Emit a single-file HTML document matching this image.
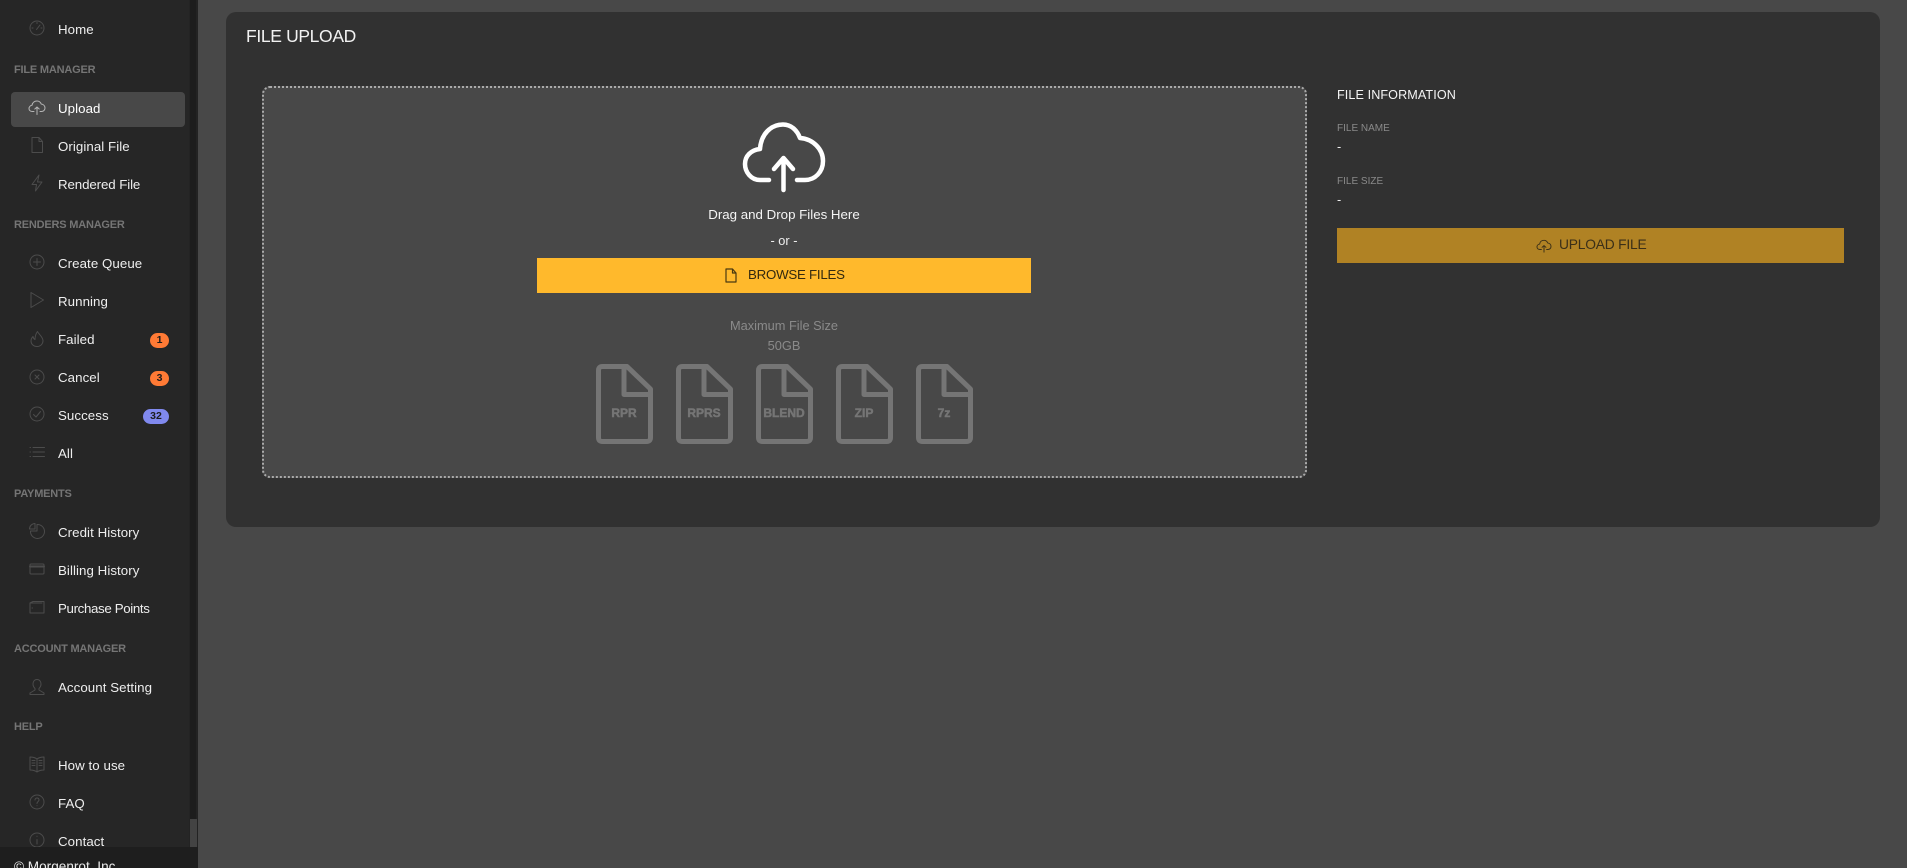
<!DOCTYPE html>
<html><head><meta charset="utf-8"><title>File Upload</title>
<style>
html,body{margin:0;padding:0;width:1907px;height:868px;overflow:hidden;background:#484848}
body{position:relative;font-family:"Liberation Sans",sans-serif;color:#eee}
.a{position:absolute}
.t{position:absolute;white-space:nowrap;line-height:20px;height:20px}
.i{left:58px;font-size:13.3px;letter-spacing:.06px;color:#eee}
.h{left:14px;font-size:11px;font-weight:bold;color:#757575;letter-spacing:-.2px;margin-top:1px}
.c{transform:translateX(-50%)}
svg{position:absolute;overflow:visible}
.s{left:28px;width:18px;height:18px;fill:none;stroke:#4c4c4c;stroke-width:1;stroke-linecap:round;stroke-linejoin:round}
.b{position:absolute;height:15px;border-radius:8px;color:#1c1c1c;font-size:10.5px;font-weight:bold;line-height:15px;text-align:center;left:150px;width:19px;background:#ff7a35}
.f{position:absolute;top:364px;width:57px;height:80px}
.f b{position:absolute;left:0;right:0;top:39px;text-align:center;font-size:12px;line-height:20px;color:#757575;-webkit-text-stroke:.5px #757575}
.f svg{left:0;top:0;width:57px;height:80px;fill:none;stroke:#757575;stroke-width:5;stroke-linejoin:round}
</style></head><body>
<div class="a" style="left:0;top:0;width:189px;height:868px;background:#262626"></div>
<div class="a" style="left:189px;top:0;width:9px;height:868px;background:#232323"></div>
<div class="a" style="left:190px;top:0;width:6px;height:819px;background:#1d1d1d"></div>
<div class="a" style="left:190px;top:819px;width:7px;height:28px;background:#434343"></div>
<div class="a" style="left:0;top:847px;width:198px;height:21px;background:#1e1e1e"></div>
<div class="a" style="left:11px;top:92px;width:174px;height:35px;border-radius:4px;background:#484848"></div>

<svg class="s" style="top:19px" viewBox="0 0 18 18"><circle cx="9" cy="9" r="7"/><path d="M9 3.500v1M4 9h1M13 9h1M8.500 10.500L12 6"/></svg>
<div class="t i" style="top:20px">Home</div>
<div class="t h" style="top:59px">FILE MANAGER</div>

<svg class="s" style="top:98px;stroke:#b5b5b5" viewBox="0 0 18 18"><path d="M6 13.500H4.500C2 13.500 1 12 1 10.500 1 9 2.200 7.500 4 7.300 4.300 4.500 6.500 3 9 3 11 3 12.500 4.200 13.200 6 15.500 6.300 17 8 17 10 17 12 15.500 13.500 13.500 13.500H12M9 16.500V9M6.800 11L9 9 11.200 11"/></svg>
<div class="t i" style="top:98.500px;color:#fff">Upload</div>

<svg class="s" style="top:136px" viewBox="0 0 18 18"><path d="M4 1.500H11L14.500 5.500V16.500H4ZM11 1.500V5.500H14.500"/></svg>
<div class="t i" style="top:136.500px">Original File</div>

<svg class="s" style="top:174px" viewBox="0 0 18 18"><path d="M11 1L4 10.500H8.500L7.500 17 14 8H9.500Z"/></svg>
<div class="t i" style="top:174.500px;letter-spacing:-.1px">Rendered File</div>

<div class="t h" style="top:214px">RENDERS MANAGER</div>

<svg class="s" style="top:253px" viewBox="0 0 18 18"><circle cx="9" cy="9" r="7"/><path d="M9 5.500v7M5.500 9h7"/></svg>
<div class="t i" style="top:253.500px">Create Queue</div>

<svg class="s" style="top:291px" viewBox="0 0 18 18"><path d="M3 1.500L15.500 9 3 16.500Z"/></svg>
<div class="t i" style="top:291.500px">Running</div>

<svg class="s" style="top:330px" viewBox="0 0 18 18"><path d="M9.500 1.500C10.500 4 14.500 6.500 15 10.500 15 14 12.500 16.500 9 16.500 5.500 16.500 3 14 3 11 3 9 4 7.500 5 6.500 5.200 8 6 9 7 9.500 7 6.500 8 3.500 9.500 1.500Z"/></svg>
<div class="t i" style="top:329.500px">Failed</div>
<div class="b" style="top:333px">1</div>

<svg class="s" style="top:368px" viewBox="0 0 18 18"><circle cx="9" cy="9" r="7"/><path d="M7 7l4 4M11 7l-4 4"/></svg>
<div class="t i" style="top:368px">Cancel</div>
<div class="b" style="top:371px">3</div>

<svg class="s" style="top:405px" viewBox="0 0 18 18"><circle cx="9" cy="9" r="7"/><path d="M5.500 9.500L8 12 12.500 6.500"/></svg>
<div class="t i" style="top:406px">Success</div>
<div class="b" style="top:409px;left:143px;width:26px;background:#8089ee">32</div>

<svg class="s" style="top:443px" viewBox="0 0 18 18"><path d="M2 4.500h.5M2 9h.5M2 13.500h.5M5 4.500h11.500M5 9h11.500M5 13.500h11.500"/></svg>
<div class="t i" style="top:444px">All</div>

<div class="t h" style="top:483px">PAYMENTS</div>

<svg class="s" style="top:522px" viewBox="0 0 18 18"><path d="M9 2.500A7 7 0 1 1 2.500 9H9ZM7 1.500A5.500 5.500 0 0 0 1.500 7H7Z"/></svg>
<div class="t i" style="top:523px">Credit History</div>

<svg class="s" style="top:560px;" viewBox="0 0 18 18"><rect x="2" y="4" width="14" height="10" rx="1"/><path d="M2 6.500h14" stroke-width="2"/></svg>
<div class="t i" style="top:561px">Billing History</div>

<svg class="s" style="top:598px" viewBox="0 0 18 18"><path d="M2 5V15H16V3.500H5L2 5H14M4 10h.5"/></svg>
<div class="t i" style="top:598.500px;letter-spacing:-.35px">Purchase Points</div>

<div class="t h" style="top:638px">ACCOUNT MANAGER</div>

<svg class="s" style="top:678px" viewBox="0 0 18 18"><path d="M9 1.500C11.500 1.500 13 3.500 13 6 13 8.500 11.500 10 11 10.500V12L16 15V16.500H2V15L7 12V10.500C6.500 10 5 8.500 5 6 5 3.500 6.500 1.500 9 1.500Z"/></svg>
<div class="t i" style="top:678px">Account Setting</div>

<div class="t h" style="top:716px">HELP</div>

<svg class="s" style="top:755px" viewBox="0 0 18 18"><path d="M9 4C7 2.500 4 2 2 2V15C4 15 7 15.500 9 17 11 15.500 14 15 16 15V2C14 2 11 2.500 9 4ZM9 4V17M4 5.500H7M4 8H7M4 10.500H7M11 5.500H14M11 8H14M11 10.500H14"/></svg>
<div class="t i" style="top:756px">How to use</div>

<svg class="s" style="top:793px" viewBox="0 0 18 18"><circle cx="9" cy="9" r="7"/><path d="M7 7C7 5.800 8 5 9 5 10.200 5 11 5.800 11 7 11 8.500 9 8.500 9 10.500M9 12.700v.1"/></svg>
<div class="t i" style="top:794px">FAQ</div>

<svg class="s" style="top:831px" viewBox="0 0 18 18"><circle cx="9" cy="9" r="7"/><path d="M9 8.500V13M9 5.300v.1"/></svg>
<div class="t i" style="top:832px">Contact</div>

<div class="a" style="left:0;top:847px;width:198px;height:21px;background:#1e1e1e;overflow:hidden">
<div class="t" style="left:14px;top:10px;font-size:13.600px;color:#eee">© Morgenrot, Inc.</div></div>

<div class="a" style="left:226px;top:12px;width:1654px;height:515px;border-radius:10px;background:#313131"></div>
<div class="t" style="left:246px;top:26px;font-size:17.500px;letter-spacing:-.35px;color:#f2f2f2">FILE UPLOAD</div>

<div class="a" style="left:262px;top:86px;width:1041px;height:388px;border:2px dotted #aaa;border-radius:8px;background:#484848"></div>

<svg style="left:743px;top:122px;width:82px;height:72px;fill:none;stroke:#fff;stroke-width:4.500;stroke-linecap:round;stroke-linejoin:round" viewBox="0 0 82 72"><path d="M26 58H17C8 58 2 50 2 42 2 34 8 28 17 27 18 12 28 2.500 40 2.500 48 2.500 54 8 57 16 70 17 80 27 80 39 80 50 72 58 62 58H54"/><path d="M40.500 68V36M31 47L40.500 36 50 47"/></svg>

<div class="t c" style="left:784px;top:205px;font-size:13.300px;color:#f5f5f5">Drag and Drop Files Here</div>
<div class="t c" style="left:784px;top:231px;font-size:12.800px;color:#eee">- or -</div>

<div class="a" style="left:537px;top:258px;width:494px;height:35px;background:#ffb92c"></div>
<svg style="left:725px;top:268px;width:12px;height:15px;fill:none;stroke:#4a3a10;stroke-width:1.200;stroke-linejoin:round" viewBox="0 0 12 15"><path d="M1 1H7.500L11 5V14H1ZM7.500 1V5H11"/></svg>
<div class="t" style="left:748px;top:265px;font-size:13.300px;letter-spacing:-.25px;color:#33290f">BROWSE FILES</div>

<div class="t c" style="left:784px;top:316px;font-size:12.800px;color:#8a8a8a">Maximum File Size</div>
<div class="t c" style="left:784px;top:336px;font-size:12.800px;color:#8a8a8a">50GB</div>

<div class="f" style="left:595.500px"><svg viewBox="0 0 57 80"><path d="M2.500 6.500Q2.500 2.500 6.500 2.500H31L54.500 25V73.500Q54.500 77.500 50.500 77.500H6.500Q2.500 77.500 2.500 73.500ZM28 2.500V30.500H54.500"/></svg><b>RPR</b></div>
<div class="f" style="left:675.500px"><svg viewBox="0 0 57 80"><path d="M2.500 6.500Q2.500 2.500 6.500 2.500H31L54.500 25V73.500Q54.500 77.500 50.500 77.500H6.500Q2.500 77.500 2.500 73.500ZM28 2.500V30.500H54.500"/></svg><b>RPRS</b></div>
<div class="f" style="left:755.500px"><svg viewBox="0 0 57 80"><path d="M2.500 6.500Q2.500 2.500 6.500 2.500H31L54.500 25V73.500Q54.500 77.500 50.500 77.500H6.500Q2.500 77.500 2.500 73.500ZM28 2.500V30.500H54.500"/></svg><b>BLEND</b></div>
<div class="f" style="left:835.500px"><svg viewBox="0 0 57 80"><path d="M2.500 6.500Q2.500 2.500 6.500 2.500H31L54.500 25V73.500Q54.500 77.500 50.500 77.500H6.500Q2.500 77.500 2.500 73.500ZM28 2.500V30.500H54.500"/></svg><b>ZIP</b></div>
<div class="f" style="left:915.500px"><svg viewBox="0 0 57 80"><path d="M2.500 6.500Q2.500 2.500 6.500 2.500H31L54.500 25V73.500Q54.500 77.500 50.500 77.500H6.500Q2.500 77.500 2.500 73.500ZM28 2.500V30.500H54.500"/></svg><b>7z</b></div>

<div class="t" style="left:1337px;top:84.500px;font-size:12.600px;letter-spacing:.1px;color:#f5f5f5">FILE INFORMATION</div>
<div class="t" style="left:1337px;top:119px;font-size:10px;color:#8a8a8a">FILE NAME</div>
<div class="t" style="left:1337px;top:137px;font-size:12.600px;color:#eee">-</div>
<div class="t" style="left:1337px;top:172px;font-size:10px;color:#8a8a8a">FILE SIZE</div>
<div class="t" style="left:1337px;top:190px;font-size:12.600px;color:#eee">-</div>

<div class="a" style="left:1337px;top:228px;width:507px;height:35px;background:#b08224"></div>
<svg style="left:1536px;top:239px;width:16px;height:14px;fill:none;stroke:#3a2f18;stroke-width:1.100;stroke-linecap:round;stroke-linejoin:round" viewBox="0 0 18 16"><path d="M6 12H4.500C2 12 1 10.500 1 9 1 7.500 2.200 6 4 5.800 4.300 3 6.500 1.500 9 1.500 11 1.500 12.500 2.700 13.200 4.500 15.500 4.800 17 6.500 17 8.500 17 10.500 15.500 12 13.500 12H12M9 15V7.500M6.800 9.500L9 7.500 11.200 9.500"/></svg>
<div class="t" style="left:1559px;top:234.500px;font-size:13.800px;letter-spacing:-.2px;color:#3a2f18">UPLOAD FILE</div>
</body></html>
